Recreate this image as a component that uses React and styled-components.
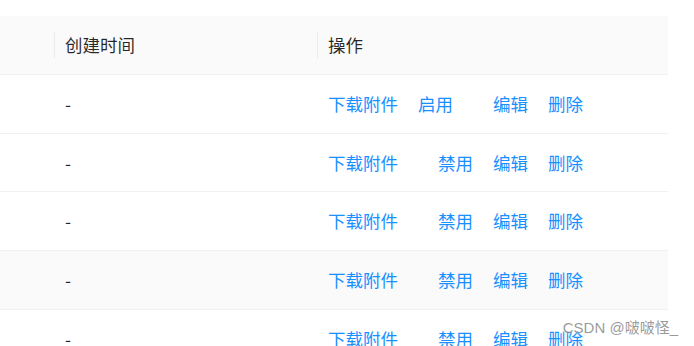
import styled, { createGlobalStyle } from "styled-components";

const GlobalStyle = createGlobalStyle`
  html, body {
    margin: 0;
    padding: 0;
    background: #fff;
    overflow: hidden;
  }
  body {
    font-family: "Noto Sans CJK SC", "Noto Sans", sans-serif;
  }
`;

const Page = styled.div`
  position: relative;
  width: 694px;
  height: 346px;
  padding-top: 16px;
  box-sizing: border-box;
`;

const Table = styled.div`
  width: 668px;
  display: grid;
  grid-template-columns: 55px 263px 1fr;
  font-size: 17.5px;
  line-height: 27.75px;
  color: rgba(0, 0, 0, 0.85);
`;

const Row = styled.div`
  display: contents;

  & > div {
    background: ${(p) => (p.$head || p.$hover ? "#fafafa" : "#fff")};
    border-bottom: 1px solid #f0f0f0;
  }
`;

const Cell = styled.div`
  position: relative;
  padding: 15px 10px;
  white-space: nowrap;

  &::before {
    content: "";
    display: ${(p) => (p.$divider ? "block" : "none")};
    position: absolute;
    left: -1px;
    top: 50%;
    width: 1px;
    height: 27px;
    transform: translateY(-50%);
    background: #ebebeb;
  }
`;

const Dash = styled.span`
  color: rgba(0, 0, 0, 0.85);
`;

const Actions = styled.div`
  display: flex;
  align-items: center;
  gap: 20px;
`;

const Link = styled.a`
  color: #1890ff;
  cursor: pointer;
  text-decoration: none;
`;

const ToggleSlot = styled.span`
  width: 55px;
  display: flex;
  justify-content: ${(p) => (p.$align === "right" ? "flex-end" : "flex-start")};
`;

const Watermark = styled.div`
  position: absolute;
  right: 16px;
  bottom: 9px;
  font-family: "Liberation Sans", "Noto Sans CJK SC", sans-serif;
  font-size: 15px;
  color: rgba(120, 120, 120, 0.75);
  text-shadow: 0 0 2px #fff;
`;

const rows = [
  { enabled: false },
  { enabled: true },
  { enabled: true },
  { enabled: true, hover: true },
  { enabled: true },
];

export default function App() {
  return (
    <>
      <GlobalStyle />
      <Page>
        <Table>
          <Row $head>
            <Cell />
            <Cell $divider>创建时间</Cell>
            <Cell $divider>操作</Cell>
          </Row>
          {rows.map((r, i) => (
            <Row key={i} $hover={r.hover}>
              <Cell />
              <Cell>
                <Dash>-</Dash>
              </Cell>
              <Cell>
                <Actions>
                  <Link>下载附件</Link>
                  <ToggleSlot $align={r.enabled ? "right" : "left"}>
                    <Link>{r.enabled ? "禁用" : "启用"}</Link>
                  </ToggleSlot>
                  <Link>编辑</Link>
                  <Link>删除</Link>
                </Actions>
              </Cell>
            </Row>
          ))}
        </Table>
        <Watermark>CSDN @啵啵怪_</Watermark>
      </Page>
    </>
  );
}
